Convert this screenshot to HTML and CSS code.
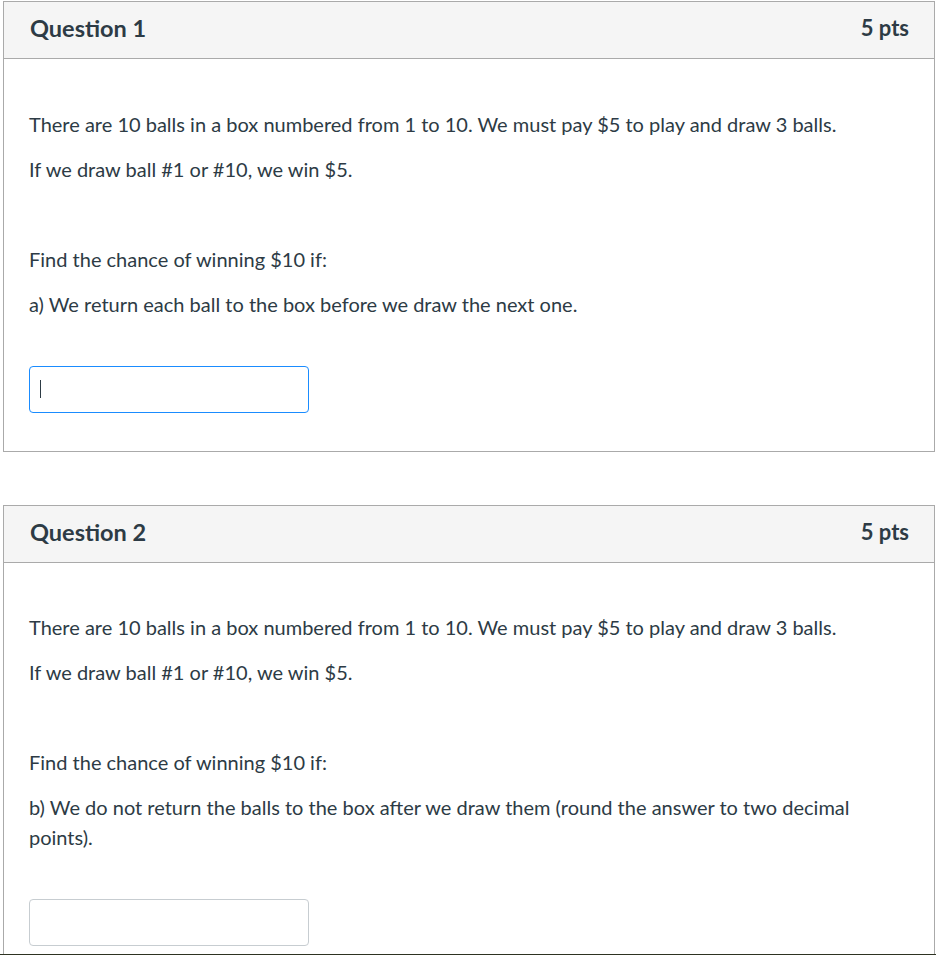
FILE: index.html
```html
<!DOCTYPE html>
<html lang="en">
<head>
<meta charset="utf-8">
<title>Quiz</title>
<link rel="stylesheet" href="styles.css">
</head>
<body>
<div class="page">
  <div class="viewport">
    <section class="question">
      <header class="q-header">
        <h2 class="q-title">Question 1</h2>
        <span class="q-points">5 pts</span>
      </header>
      <div class="q-body">
        <p>There are 10 balls in a box numbered from 1 to 10. We must pay $5 to play and draw 3 balls.</p>
        <p>If we draw ball #1 or #10, we win $5.</p>
        <p class="blank">&nbsp;</p>
        <p>Find the chance of winning $10 if:</p>
        <p>a) We return each ball to the box before we draw the next one.</p>
        <div class="answer focused"><span class="caret"></span></div>
      </div>
    </section>
    <section class="question">
      <header class="q-header">
        <h2 class="q-title">Question 2</h2>
        <span class="q-points">5 pts</span>
      </header>
      <div class="q-body q-body-tight">
        <p>There are 10 balls in a box numbered from 1 to 10. We must pay $5 to play and draw 3 balls.</p>
        <p>If we draw ball #1 or #10, we win $5.</p>
        <p class="blank">&nbsp;</p>
        <p>Find the chance of winning $10 if:</p>
        <p>b) We do not return the balls to the box after we draw them (round the answer to two decimal points).</p>
        <div class="answer"></div>
      </div>
    </section>
  </div>
  <div class="edge"></div>
</div>
</body>
</html>
```
FILE: styles.css
```css
* { box-sizing: border-box; }
html, body { margin: 0; padding: 0; background: #fff; }
body {
  font-family: Lato, "Noto Sans", "Liberation Sans", sans-serif;
  color: #2d3b45;
}
.page {
  height: 955px;
  display: flex;
  flex-direction: column;
  overflow: hidden;
}
.viewport {
  flex: 1;
  overflow: hidden;
  padding: 1px 1px 0 3px;
}
.edge {
  height: 1px;
  background: #2e3322;
}
.question {
  width: 932px;
  border: 1px solid #aaaaaa;
  margin-bottom: 53px;
}
.q-header {
  height: 57px;
  background: #f5f5f5;
  border-bottom: 1px solid #aaaaaa;
  display: flex;
  align-items: center;
  justify-content: space-between;
  padding: 0 25px 5px 26px;
}
.q-title {
  margin: 0;
  font-size: 23.5px;
  font-weight: 700;
  color: #2d3b45;
}
.q-points {
  font-size: 22px;
  font-weight: 700;
  color: #2d3b45;
}
.q-body {
  padding: 50px 25px 38px 25px;
  font-size: 20px;
  line-height: 30px;
}
.q-body-tight { padding-top: 49px; }
.q-body p {
  margin: 0 0 15px 0;
}
.q-body p:last-of-type { margin-bottom: 0; }
.answer {
  margin-top: 47px;
  width: 280px;
  height: 47px;
  border: 1px solid #c7cdd1;
  border-radius: 4px;
  background: #fff;
  position: relative;
}
.answer.focused { border-color: #1a8cff; }
.caret {
  position: absolute;
  left: 10px;
  top: 13px;
  width: 1px;
  height: 18px;
  background: #2d3b45;
}
```
